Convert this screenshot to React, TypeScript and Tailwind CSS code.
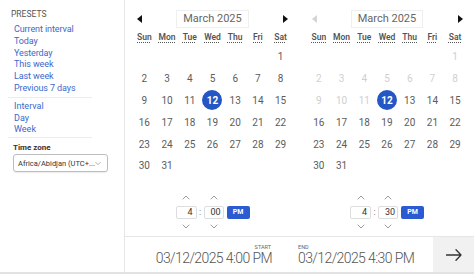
import React from 'react'

const DAYS = ['Sun', 'Mon', 'Tue', 'Wed', 'Thu', 'Fri', 'Sat']
const PRESETS = ['Current interval', 'Today', 'Yesterday', 'This week', 'Last week', 'Previous 7 days']
const UNITS = ['Interval', 'Day', 'Week']

// March 2025 starts on a Saturday
const CELLS: (number | null)[] = [...Array(6).fill(null), ...Array.from({ length: 31 }, (_, i) => i + 1)]

function Tri({ dir, muted }: { dir: 'l' | 'r'; muted?: boolean }) {
  return (
    <svg width="5" height="8" viewBox="0 0 5 8">
      <polygon points={dir === 'l' ? '5,0 0,4 5,8' : '0,0 5,4 0,8'} fill={muted ? '#d4d4d4' : '#111'} />
    </svg>
  )
}

function Chev({ up }: { up?: boolean }) {
  return (
    <svg width="8" height="5" viewBox="0 0 8 5">
      <polyline
        points={up ? '1,4 4,1 7,4' : '1,1 4,4 7,1'}
        fill="none"
        stroke="#9a9a9a"
        strokeWidth="1"
        strokeLinecap="round"
        strokeLinejoin="round"
      />
    </svg>
  )
}

function Calendar({ disabledBefore = 0, prevMuted }: { disabledBefore?: number; prevMuted?: boolean }) {
  return (
    <div className="w-[159px] mx-auto">
      <div className="mt-[10px] h-[18px] flex items-center justify-between px-[4px]">
        <Tri dir="l" muted={prevMuted} />
        <div className="h-[18px] px-[6px] flex items-center border border-[#efefef] text-[11px] text-[#666]">
          March 2025
        </div>
        <Tri dir="r" />
      </div>
      <div className="mt-[1px] grid grid-cols-7 h-[17px] items-center">
        {DAYS.map((d) => (
          <div key={d} className="text-center text-[8.5px] font-semibold text-[#555] underline decoration-dotted underline-offset-2">
            {d}
          </div>
        ))}
      </div>
      <div className="grid grid-cols-7 auto-rows-[21.8px]">
        {CELLS.map((n, i) => (
          <div key={i} className="flex items-center justify-center">
            {n === 12 ? (
              <div className="w-[20px] h-[20px] rounded-full bg-[#2457c5] text-white text-[10px] font-bold flex items-center justify-center">
                12
              </div>
            ) : n ? (
              <span className={`text-[10px] ${n < disabledBefore ? 'text-[#cfcfcf]' : 'text-[#5c5c5c]'}`}>{n}</span>
            ) : null}
          </div>
        ))}
      </div>
    </div>
  )
}

function TimePicker({ minutes }: { minutes: string }) {
  return (
    <div className="mt-[17px] flex items-center justify-center">
      <div className="flex flex-col items-center gap-[4px]">
        <div className="h-[8px] flex items-center"><Chev up /></div>
        <div className="w-[21px] h-[13px] border border-[#dddddd] rounded-[2px] text-[9px] text-[#333] flex items-center justify-end pr-[3px]">4</div>
        <div className="h-[8px] flex items-center"><Chev /></div>
      </div>
      <div className="w-[7px] text-center text-[9px] text-[#666]">:</div>
      <div className="flex flex-col items-center gap-[4px]">
        <div className="h-[8px] flex items-center"><Chev up /></div>
        <div className="w-[20px] h-[13px] border border-[#dddddd] rounded-[2px] text-[9px] text-[#333] flex items-center justify-end pr-[2px]">{minutes}</div>
        <div className="h-[8px] flex items-center"><Chev /></div>
      </div>
      <div className="ml-[3px] w-[23px] h-[13px] rounded-[2px] bg-[#2a5bd0] text-white text-[7px] font-bold flex items-center justify-center">PM</div>
    </div>
  )
}

export default function App() {
  return (
    <div className="w-[474px] h-[274px] flex bg-white border-b-2 border-[#e2e2e2] font-['Roboto','Liberation_Sans',sans-serif] overflow-hidden">
      <div className="w-[125px] shrink-0 border-r border-[#e6e6e6] pl-[11px] pt-[9px]">
        <div className="text-[8.5px] leading-[10px] uppercase text-[#555]">Presets</div>
        <div className="mt-[5px] pl-[3px]">
          {PRESETS.map((p) => (
            <div key={p} className="text-[9px] leading-[11.8px] text-[#3b69cc] tracking-[-0.1px]">{p}</div>
          ))}
        </div>
        <div className="mt-[2px] -ml-[3px] w-[84px] border-t border-[#ececec]" />
        <div className="mt-[3px] pl-[3px]">
          {UNITS.map((p) => (
            <div key={p} className="text-[9px] leading-[11.8px] text-[#3b69cc]">{p}</div>
          ))}
        </div>
        <div className="mt-[1px] -ml-[3px] w-[84px] border-t border-[#ececec]" />
        <div className="mt-[5px] pl-[2px] text-[8px] leading-[10px] font-bold text-[#333]">Time zone</div>
        <div className="mt-[1px] ml-[2px] w-[95px] h-[18px] border border-[#bdbdbd] rounded-[3px] shadow-[0_1px_1px_rgba(0,0,0,0.08)] flex items-center justify-between pl-[4px] pr-[6px]">
          <span className="text-[7.5px] text-[#333] whitespace-nowrap">Africa/Abidjan (UTC+...</span>
          <Chev />
        </div>
      </div>
      <div className="flex-1 flex flex-col">
        <div className="flex flex-1 border-b border-[#e6e6e6]">
          <div className="w-[175px]">
            <Calendar />
            <TimePicker minutes="00" />
          </div>
          <div className="flex-1">
            <Calendar disabledBefore={12} prevMuted />
            <TimePicker minutes="30" />
          </div>
        </div>
        <div className="h-[35px] flex">
          <div className="w-[147px] flex flex-col items-end justify-center">
            <div className="text-[5.5px] leading-[6px] uppercase text-[#666] pr-[1px]">Start</div>
            <div className="text-[14px] leading-[16px] font-light text-[#555] tracking-[-0.6px]">03/12/2025 4:00 PM</div>
          </div>
          <div className="ml-[26px] flex flex-col items-start justify-center">
            <div className="text-[5.5px] leading-[6px] uppercase text-[#666]">End</div>
            <div className="text-[14px] leading-[16px] font-light text-[#555] tracking-[-0.6px]">03/12/2025 4:30 PM</div>
          </div>
          <div className="flex-1" />
          <div className="w-[41px] bg-[#f1f1f1] flex items-center justify-center">
            <svg width="16" height="12" viewBox="0 0 16 12">
              <path d="M0.5 6H15M10 0.8L15 6L10 11.2" fill="none" stroke="#333" strokeWidth="1.3" strokeLinecap="round" strokeLinejoin="round" />
            </svg>
          </div>
        </div>
      </div>
    </div>
  )
}
